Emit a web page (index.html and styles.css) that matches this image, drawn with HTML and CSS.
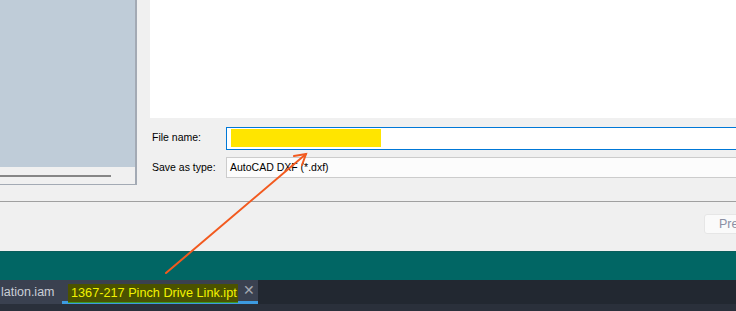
FILE: index.html
```html
<!DOCTYPE html>
<html lang="en">
<head>
    <meta charset="UTF-8">
    <meta name="viewport" content="width=device-width, initial-scale=1.0">
    <title>Save As</title>
    <link rel="stylesheet" href="styles.css">
</head>
<body>
    <div class="screen">
        <div class="dialog">
            <div class="dialog-body">
                <div class="nav-pane">
                    <div class="nav-tree"></div>
                    <div class="nav-scroll"><span class="scroll-thumb"></span></div>
                </div>
                <div class="main-pane">
                    <div class="file-list"></div>
                    <div class="field-row">
                        <label class="field-label">File name:</label>
                        <div class="name-input"><span class="name-mark"></span></div>
                    </div>
                    <div class="field-row field-row-type">
                        <label class="field-label">Save as type:</label>
                        <div class="type-select">AutoCAD DXF (*.dxf)</div>
                    </div>
                </div>
            </div>
            <div class="dialog-footer">
                <button class="btn">Preview</button>
            </div>
        </div>
        <div class="status-band"></div>
        <div class="doc-tabs">
            <div class="doc-tab">lation.iam</div>
            <div class="doc-tab active">
                <span class="tab-mark">1367-217 Pinch Drive Link.ipt</span>
                <span class="tab-close">&#x2715;</span>
            </div>
        </div>
        <div class="doc-foot"></div>
        <svg class="callout" width="736" height="311" viewBox="0 0 736 311">
            <g stroke="#f25a1f" stroke-width="2" stroke-linecap="round" fill="none">
                <line x1="166" y1="273" x2="306" y2="154"/>
                <polyline points="294,156 306,154 302,165"/>
            </g>
        </svg>
    </div>
</body>
</html>
```

FILE: styles.css
```css
*{
    margin: 0;
    padding: 0;
    box-sizing: border-box;
}
body{
    background: #f0f0f0;
    font-family: "Liberation Sans", Arial, sans-serif;
}
.screen{
    width: 736px;
    height: 311px;
    overflow: hidden;
    position: relative;
}
.dialog{
    background: #f0f0f0;
}
.dialog-body{
    display: flex;
    height: 201px;
    border-bottom: 1px solid #a0a0a0;
    box-sizing: content-box;
}
.nav-pane{
    width: 137px;
    height: 185px;
    flex: none;
    border-right: 2px solid #a3aab4;
    border-bottom: 1px solid #a3aab4;
    display: flex;
    flex-direction: column;
}
.nav-tree{
    height: 167px;
    background: #bfccd8;
}
.nav-scroll{
    flex: 1;
    background: #f0f0f0;
    padding-top: 8px;
}
.scroll-thumb{
    display: block;
    width: 111px;
    height: 2px;
    background: #868686;
}
.main-pane{
    flex: none;
    width: 600px;
    margin-left: 13px;
}
.file-list{
    height: 118px;
    background: #fff;
}
.field-row{
    display: flex;
    align-items: center;
    margin-top: 9px;
}
.field-row-type{
    margin-top: 7px;
}
.field-label{
    width: 76px;
    padding: 0 0 3px 2px;
    font-size: 10.5px;
    color: #000;
}
.field-row-type .field-label{
    padding-bottom: 1px;
}
.name-input{
    flex: 1;
    height: 23px;
    background: #fff;
    border: 1px solid #0078d7;
    padding: 1px 4px;
}
.name-mark{
    display: block;
    width: 150px;
    height: 18px;
    background: #ffe500;
}
.type-select{
    flex: 1;
    height: 21px;
    background: #fcfcfc;
    border: 1px solid #cccccc;
    padding-left: 3px;
    font-size: 10.5px;
    line-height: 19px;
    color: #000;
}
.dialog-footer{
    height: 49px;
    padding: 12px 0 0 704px;
}
.btn{
    display: block;
    width: 80px;
    height: 20px;
    border: 1px solid #e6e6e6;
    border-radius: 3px;
    background: #fafafa;
    color: #8b8fa3;
    font-family: "Liberation Sans", Arial, sans-serif;
    font-size: 12.5px;
    text-align: left;
    padding-left: 14px;
}
.status-band{
    height: 29px;
    background: #016664;
    border-top: 1px solid #0a5d5b;
}
.doc-tabs{
    display: flex;
    height: 24px;
    background: #222831;
}
.doc-tab{
    display: flex;
    align-items: center;
    background: #3a4150;
    color: #c9ced6;
    font-size: 12.5px;
    white-space: nowrap;
}
.doc-tab:first-child{
    width: 62px;
    padding-left: 1px;
}
.doc-tab.active{
    width: 196px;
    padding-left: 6px;
    border-bottom: 3px solid #3d9be0;
    align-items: flex-end;
}
.tab-mark{
    display: block;
    width: 170px;
    height: 19px;
    margin-bottom: -2px;
    padding-left: 3px;
    line-height: 18px;
    font-size: 12.7px;
    background: #4b5200;
    color: #f2f200;
    border-bottom: 1px solid #3e9a2a;
}
.tab-close{
    margin: 0 0 3px 5px;
    font-size: 14px;
    line-height: 16px;
    color: #a4a9b1;
}
.doc-foot{
    height: 7px;
    background: #2a303b;
}
.callout{
    position: absolute;
    left: 0;
    top: 0;
    pointer-events: none;
}
```
